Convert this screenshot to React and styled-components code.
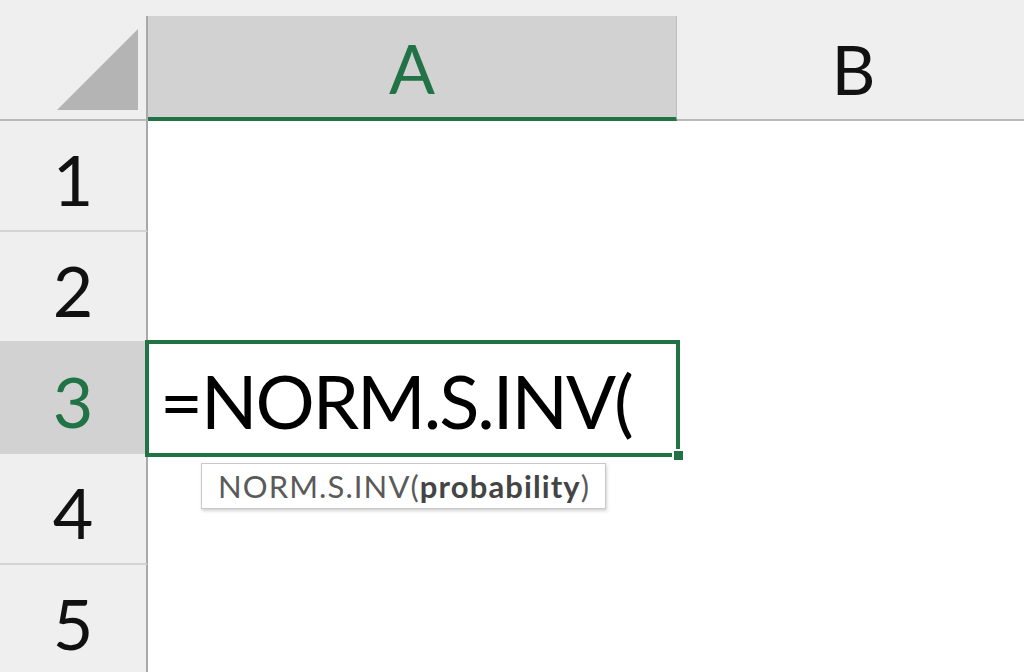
import React from "react";
import styled, { createGlobalStyle, css } from "styled-components";

const GREEN = "#217346";

const GlobalStyle = createGlobalStyle`
  html, body {
    margin: 0;
    padding: 0;
    background: #ffffff;
    overflow: hidden;
  }
  body {
    font-family: Lato, "Open Sans", "Liberation Sans", sans-serif;
  }
`;

const Sheet = styled.div`
  width: 1024px;
  height: 672px;
  display: flex;
  flex-direction: column;
  background: #ffffff;
  overflow: hidden;
`;

const TopStrip = styled.div`
  height: 16px;
  flex: none;
  background: #efefef;
`;

const Grid = styled.div`
  display: grid;
  grid-template-columns: 148px 529px 1fr;
`;

const HeaderRow = styled(Grid)`
  height: 105px;
  flex: none;
  background: #efefef;
`;

const Corner = styled.div`
  box-sizing: border-box;
  display: flex;
  align-items: flex-end;
  justify-content: flex-end;
  padding: 0 8px 9px 0;
  border-right: 2px solid #a9a9a9;
  border-bottom: 2px solid #b9b9b9;
`;

const ColHeader = styled.div`
  box-sizing: border-box;
  display: flex;
  align-items: center;
  justify-content: center;
  font-size: 68px;
  line-height: 1;
  padding-top: 2px;
  padding-left: 6px;
  color: #111111;
  border-bottom: 2px solid #b9b9b9;
  ${(p) =>
    p.$selected &&
    css`
      padding-left: 0;
      background: #d2d2d2;
      color: ${GREEN};
      border-right: 1px solid #bdbdbd;
      border-bottom: 4px solid ${GREEN};
    `}
`;

const Row = styled(Grid)`
  height: 111px;
  flex: none;
`;

const RowHeader = styled.div`
  box-sizing: border-box;
  display: flex;
  align-items: center;
  justify-content: center;
  padding-top: 6px;
  font-size: 70px;
  line-height: 1;
  color: #111111;
  background: ${(p) => (p.$selected ? "#d2d2d2" : "#efefef")};
  ${(p) => p.$selected && css`color: ${GREEN};`}
  border-right: 2px solid #a9a9a9;
  border-bottom: 2px solid #d3d3d3;
`;

const Cell = styled.div`
  position: relative;
  box-sizing: border-box;
  display: flex;
  align-items: center;
  padding-left: 12px;
  padding-top: 4px;
  background: #ffffff;
  font-size: 74px;
  letter-spacing: -2px;
  line-height: 1;
  color: #000000;
  white-space: nowrap;
  ${(p) =>
    p.$active &&
    css`
      z-index: 2;
      &::after {
        content: "";
        position: absolute;
        top: -3px;
        left: -3px;
        right: -3px;
        bottom: -3px;
        border: 4px solid ${GREEN};
        pointer-events: none;
      }
    `}
`;

const FillHandle = styled.span`
  position: absolute;
  right: -8px;
  bottom: -8px;
  width: 9px;
  height: 9px;
  background: ${GREEN};
  border: 2px solid #ffffff;
  z-index: 3;
`;

const Tooltip = styled.div`
  position: absolute;
  left: 53px;
  top: 120px;
  box-sizing: border-box;
  width: 405px;
  height: 46px;
  display: flex;
  align-items: center;
  padding-left: 16px;
  background: #ffffff;
  border: 1px solid #c8c8c8;
  box-shadow: 1px 2px 3px rgba(0, 0, 0, 0.18);
  font-size: 31px;
  letter-spacing: 1.1px;
  color: #5a5a5a;
  white-space: nowrap;
`;

const Arg = styled.b`
  font-weight: 700;
  color: #444444;
`;

const SelectAll = () => (
  <svg width="81" height="81" viewBox="0 0 81 81">
    <polygon points="0,81 81,0 81,81" fill="#b4b4b4" />
  </svg>
);

export default function App() {
  const rows = [1, 2, 3, 4, 5];
  return (
    <>
      <GlobalStyle />
      <Sheet>
        <TopStrip />
        <HeaderRow>
          <Corner>
            <SelectAll />
          </Corner>
          <ColHeader $selected>A</ColHeader>
          <ColHeader>B</ColHeader>
        </HeaderRow>
        {rows.map((n) => (
          <Row key={n}>
            <RowHeader $selected={n === 3}>{n}</RowHeader>
            {n === 3 ? (
              <Cell $active>
                =NORM.S.INV(
                <FillHandle />
                <Tooltip>
                  NORM.S.INV(<Arg>probability</Arg>)
                </Tooltip>
              </Cell>
            ) : (
              <Cell />
            )}
            <Cell />
          </Row>
        ))}
      </Sheet>
    </>
  );
}
